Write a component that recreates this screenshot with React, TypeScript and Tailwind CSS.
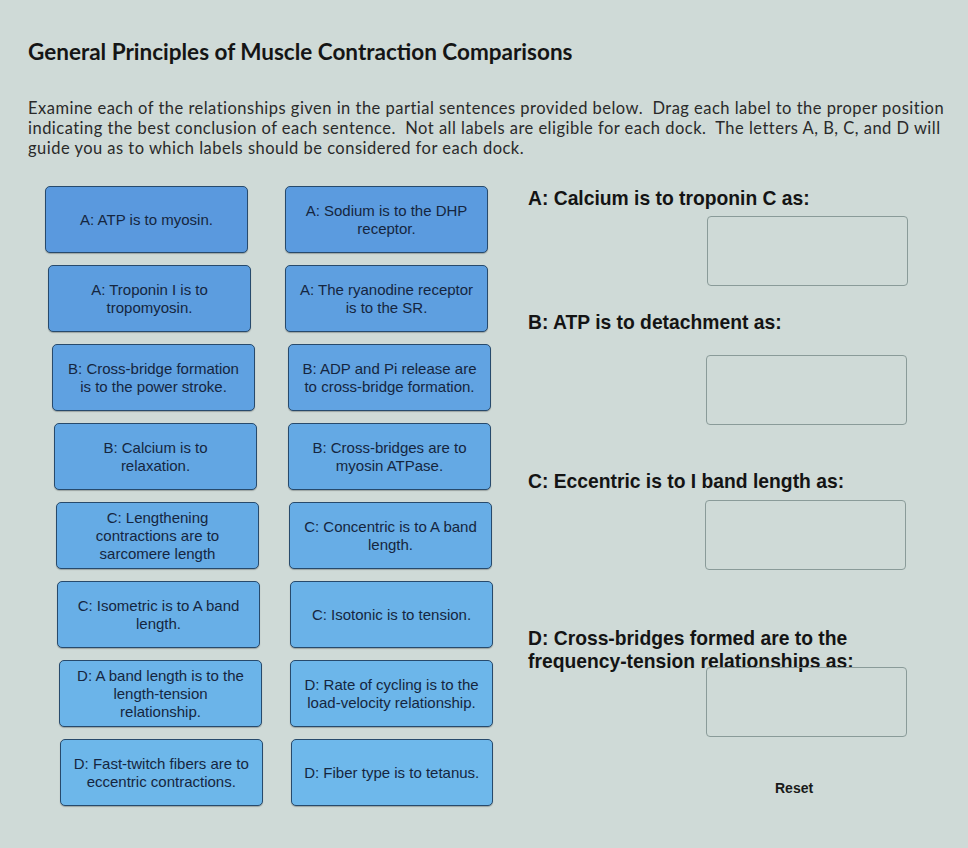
const labels: { text: string; bg: string }[][] = [
  [
    { text: "A: ATP is to myosin.", bg: "bg-[#5a99de]" },
    { text: "A: Sodium is to the DHP\nreceptor.", bg: "bg-[#5b9bdf]" },
  ],
  [
    { text: "A: Troponin I is to\ntropomyosin.", bg: "bg-[#5c9ddf]" },
    { text: "A: The ryanodine receptor\nis to the SR.", bg: "bg-[#5e9fe0]" },
  ],
  [
    { text: "B: Cross-bridge formation\nis to the power stroke.", bg: "bg-[#5fa1e1]" },
    { text: "B: ADP and Pi release are\nto cross-bridge formation.", bg: "bg-[#61a3e2]" },
  ],
  [
    { text: "B: Calcium is to\nrelaxation.", bg: "bg-[#62a6e3]" },
    { text: "B: Cross-bridges are to\nmyosin ATPase.", bg: "bg-[#64a9e4]" },
  ],
  [
    { text: "C: Lengthening\ncontractions are to\nsarcomere length", bg: "bg-[#65abe5]" },
    { text: "C: Concentric is to A band\nlength.", bg: "bg-[#67ade6]" },
  ],
  [
    { text: "C: Isometric is to A band\nlength.", bg: "bg-[#68afe7]" },
    { text: "C: Isotonic is to tension.", bg: "bg-[#6ab2e8]" },
  ],
  [
    { text: "D: A band length is to the\nlength-tension\nrelationship.", bg: "bg-[#6bb4e9]" },
    { text: "D: Rate of cycling is to the\nload-velocity relationship.", bg: "bg-[#6cb6ea]" },
  ],
  [
    { text: "D: Fast-twitch fibers are to\neccentric contractions.", bg: "bg-[#6db7ea]" },
    { text: "D: Fiber type is to tetanus.", bg: "bg-[#6eb8eb]" },
  ],
];

const rowShift = [
  { pl: "pl-0", gap: "gap-[37px]" },
  { pl: "pl-[3px]", gap: "gap-[34px]" },
  { pl: "pl-[7px]", gap: "gap-[33px]" },
  { pl: "pl-[9px]", gap: "gap-[31px]" },
  { pl: "pl-[11px]", gap: "gap-[30px]" },
  { pl: "pl-[12px]", gap: "gap-[30px]" },
  { pl: "pl-[14px]", gap: "gap-[28px]" },
  { pl: "pl-[15px]", gap: "gap-[28px]" },
];

const docks = [
  { q: "A: Calcium is to troponin C as:", mt: "mt-[1px]", boxMt: "mt-[6px]", ml: "ml-[179px]" },
  { q: "B: ATP is to detachment as:", mt: "mt-[25px]", boxMt: "mt-[21px]", ml: "ml-[178px]" },
  { q: "C: Eccentric is to I band length as:", mt: "mt-[45px]", boxMt: "mt-[7px]", ml: "ml-[177px]" },
  {
    q: (
      <>
        D: Cross-bridges formed are to the
        <br />
        frequency-tension relationships as:
      </>
    ),
    mt: "mt-[57px]",
    boxMt: "mt-[-6px]",
    ml: "ml-[178px]",
  },
];

function Label({ text, bg }: { text: string; bg: string }) {
  return (
    <div
      className={`flex h-[67px] w-[203px] items-center justify-center whitespace-pre-line rounded-[5px] border-[1.5px] border-[#274a6c] ${bg} px-2 text-center text-[15px] leading-[18px] text-[#152640] shadow-[0_1px_1px_rgba(0,0,0,0.25)]`}
    >
      {text}
    </div>
  );
}

export default function App() {
  return (
    <div
      className="min-h-[848px] w-full bg-[#cfdad7] pt-[39px] text-[#1b1b1b]"
      style={{ fontFamily: '"Liberation Sans", Arial, sans-serif' }}
    >
      <h1
        className="pl-[28px] text-[22.5px] font-bold leading-[26px] text-[#151515]"
        style={{ fontFamily: "Lato, sans-serif" }}
      >
        General Principles of Muscle Contraction Comparisons
      </h1>

      <p
        className="mt-[33px] whitespace-nowrap pl-[28px] text-[16.5px] leading-[20px] tracking-[0.48px] text-[#2a2a2a]"
        style={{ fontFamily: "Lato, sans-serif" }}
      >
        Examine each of the relationships given in the partial sentences provided below.&nbsp; Drag each label to the proper position
        <br />
        indicating the best conclusion of each sentence.&nbsp; Not all labels are eligible for each dock.&nbsp; The letters A, B, C, and D will
        <br />
        guide you as to which labels should be considered for each dock.
      </p>

      <div className="mt-[28px] flex">
        <div className="ml-[45px] flex w-[448px] flex-col gap-[12px]">
          {labels.map((row, i) => (
            <div key={i} className={`flex ${rowShift[i].pl} ${rowShift[i].gap}`}>
              {row.map((l) => (
                <Label key={l.text} text={l.text} bg={l.bg} />
              ))}
            </div>
          ))}
        </div>

        <div className="ml-[35px] flex w-[400px] flex-col">
          {docks.map((d, i) => (
            <div key={i} className={`${d.mt} flex flex-col`}>
              <div className="text-[19.3px] font-bold leading-[23px] text-[#141414]">{d.q}</div>
              <div className={`${d.boxMt} ${d.ml} h-[70px] w-[201px] rounded-[4px] border border-[#8a9b99]`} />
            </div>
          ))}
          <div className="ml-[247px] mt-[41px] text-[14px] font-bold leading-[20px] text-[#1a1a1a]">Reset</div>
        </div>
      </div>
    </div>
  );
}
